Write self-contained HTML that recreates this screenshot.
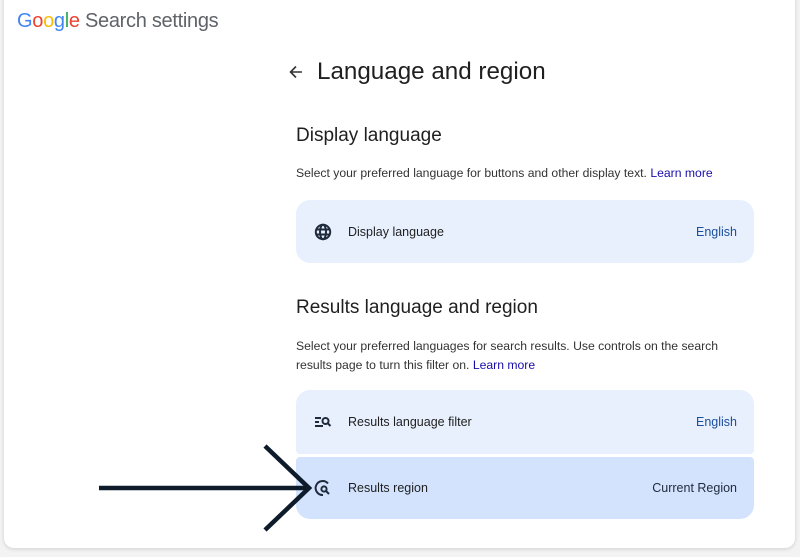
<!DOCTYPE html>
<html><head><style>
body{margin:0;width:800px;height:557px;background:#f3f3f3;font-family:"Liberation Sans",Arial,sans-serif;position:relative;overflow:hidden}
.card{position:absolute;left:4px;top:-10px;width:791px;height:558px;background:#fff;border-radius:10px;box-shadow:0 1px 4px rgba(0,0,0,.15)}
.a{position:absolute;white-space:nowrap}
.row{position:absolute;left:296px;width:458px;background:#e8f0fe;color:#1f1f1f;font-size:12.5px}
.row .l{position:absolute;left:52px;top:50%;transform:translateY(-50%)}
.row .r{position:absolute;right:17px;top:50%;transform:translateY(-50%);color:#1a4f9c}
.row svg{position:absolute;left:18px;top:50%;transform:translateY(-50%)}
a{color:#1a0dab;text-decoration:none}
</style></head><body>
<div class="card"></div>
<div class="a" style="left:17px;top:10px;font-size:20px;letter-spacing:-0.3px"><span style="color:#4285f4">G</span><span style="color:#ea4335">o</span><span style="color:#fbbc05">o</span><span style="color:#4285f4">g</span><span style="color:#34a853">l</span><span style="color:#ea4335">e</span> <span style="color:#5f6368">Search settings</span></div>
<svg class="a" style="left:287px;top:63px" width="18" height="18" viewBox="0 0 18 18"><path d="M15 9H4M9 3.5L3.5 9 9 14.5" stroke="#333" stroke-width="1.6" fill="none"/></svg>
<div class="a" style="left:317px;top:58px;font-size:24.2px;color:#1f1f1f">Language and region</div>
<div class="a" style="left:296px;top:125px;font-size:19px;color:#1f1f1f">Display language</div>
<div class="a" style="left:296px;top:166px;font-size:12.2px;color:#333">Select your preferred language for buttons and other display text. <a>Learn more</a></div>
<div class="row" style="top:200px;height:63px;border-radius:14px">
<svg width="18" height="18" viewBox="0 0 18 18"><g fill="none" stroke="#1f2a3a" stroke-width="2"><circle cx="9" cy="9" r="7.2"/><ellipse cx="9" cy="9" rx="3" ry="7.2"/><path d="M2 6.5h14M2 11.5h14"/></g></svg>
<span class="l">Display language</span><span class="r">English</span></div>
<div class="a" style="left:296px;top:297px;font-size:19px;color:#1f1f1f">Results language and region</div>
<div class="a" style="left:296px;top:337px;font-size:12.2px;color:#333;line-height:19px">Select your preferred languages for search results. Use controls on the search<br>results page to turn this filter on. <a>Learn more</a></div>
<div class="row" style="top:390px;height:64px;border-radius:14px 14px 4px 4px">
<svg width="18" height="18" viewBox="0 0 18 18"><g fill="none" stroke="#1f2a3a" stroke-width="2"><path d="M1 5h6M1 9h4M1 13h8"/><circle cx="11.5" cy="8" r="3"/><path d="M13.7 10.2L16.5 13"/></g></svg>
<span class="l">Results language filter</span><span class="r">English</span></div>
<div class="row" style="top:457px;height:62px;border-radius:4px 4px 14px 14px;background:#d3e3fd">
<svg width="18" height="18" viewBox="0 0 18 18"><g fill="none" stroke="#1f2a3a" stroke-width="2"><path d="M14 4.5A7 7 0 1 0 9 16"/><circle cx="10" cy="10" r="2.6"/><path d="M12 12l3 3"/></g></svg>
<span class="l">Results region</span><span class="r" style="color:#1f2a3a">Current Region</span></div>
<svg class="a" style="left:95px;top:443px" width="222" height="90" viewBox="0 0 222 90"><g stroke="#0d1b2a" stroke-width="4.5" fill="none"><path d="M4 45H214"/><path d="M170 3L214 45 170 87"/></g></svg>
</body></html>
